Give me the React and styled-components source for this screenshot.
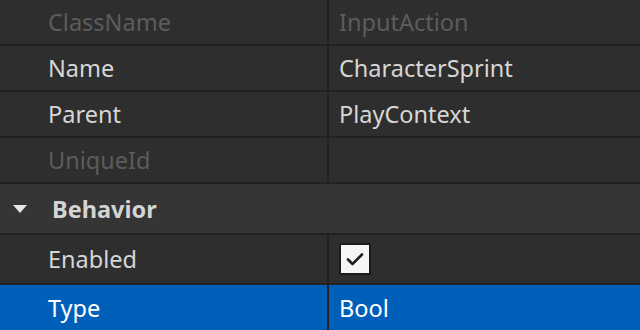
import React from "react";
import styled, { createGlobalStyle } from "styled-components";

const Global = createGlobalStyle`
  html, body { margin: 0; padding: 0; background: #2e2e2e; }
  body { width: 640px; height: 330px; overflow: hidden; }
`;

const Panel = styled.div`
  width: 640px;
  height: 330px;
  overflow: hidden;
  background: #2e2e2e;
  font-family: "Noto Sans", "Open Sans", sans-serif;
  font-size: 23.5px;
  color: #d6d6d6;
`;

const Row = styled.div`
  display: flex;
  height: ${(p) => p.h}px;
  background: ${(p) => (p.selected ? "#005fb8" : "#2e2e2e")};
  color: ${(p) => (p.selected ? "#ffffff" : p.disabled ? "#5c5c5c" : "#d6d6d6")};
  border-bottom: 2px solid #222222;
`;

const NameCell = styled.div`
  width: 329px;
  box-sizing: border-box;
  padding-left: 48px;
  display: flex;
  align-items: center;
  border-right: 2px solid #222222;
`;

const ValueCell = styled.div`
  flex: 1;
  padding-left: 10px;
  display: flex;
  align-items: center;
`;

const Section = styled.div`
  display: flex;
  align-items: center;
  height: 49px;
  background: #353535;
  border-bottom: 2px solid #222222;
  font-weight: 700;
  color: #d4d4d4;
`;

const Arrow = styled.div`
  width: 0;
  height: 0;
  margin-left: 13px;
  margin-right: 25px;
  border-left: 7px solid transparent;
  border-right: 7px solid transparent;
  border-top: 8px solid #e6e6e6;
`;

const Check = styled.div`
  width: 28px;
  height: 28px;
  background: #f6f6f6;
  border: 2px solid #1c1c1c;
  display: flex;
  align-items: center;
  justify-content: center;
`;

const props = [
  { name: "ClassName", value: "InputAction", disabled: true, h: 44 },
  { name: "Name", value: "CharacterSprint", h: 44 },
  { name: "Parent", value: "PlayContext", h: 44 },
  { name: "UniqueId", value: "", disabled: true, h: 44 },
];

export default function App() {
  return (
    <Panel>
      <Global />
      {props.map((p) => (
        <Row key={p.name} h={p.h} disabled={p.disabled}>
          <NameCell>{p.name}</NameCell>
          <ValueCell>{p.value}</ValueCell>
        </Row>
      ))}
      <Section>
        <Arrow />
        Behavior
      </Section>
      <Row h={48}>
        <NameCell>Enabled</NameCell>
        <ValueCell>
          <Check>
            <svg width="20" height="16" viewBox="0 0 20 16">
              <path d="M3 8.5 L7.5 13 L17 3.5" fill="none" stroke="#1e1e1e" strokeWidth="2.6" strokeLinecap="round" strokeLinejoin="round" />
            </svg>
          </Check>
        </ValueCell>
      </Row>
      <Row h={46} selected>
        <NameCell>Type</NameCell>
        <ValueCell>Bool</ValueCell>
      </Row>
    </Panel>
  );
}
